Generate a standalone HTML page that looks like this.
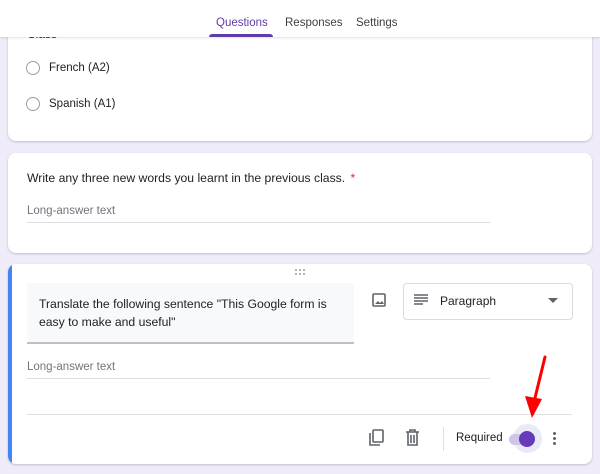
<html><head><style>
body{margin:0;width:600px;height:474px;background:#f0ebf8;font-family:"Liberation Sans",sans-serif;position:relative;overflow:hidden}
.a{position:absolute}
.card{position:absolute;left:8px;width:584px;background:#fff;border-radius:8px;box-shadow:0 1px 2px rgba(0,0,0,.2)}
.t{position:absolute;font-size:12px;color:#202124;white-space:nowrap}
.g{position:absolute;font-size:11.5px;color:#70757a;white-space:nowrap}
</style></head><body>
<div class="card" style="top:20px;height:121px"></div>
<div class="t" style="left:27px;top:27px;font-size:12px">Class</div>
<div class="a" style="left:0;top:0;width:600px;height:37px;background:#fff;box-shadow:0 1px 2px rgba(0,0,0,.12)"></div>
<div class="t" style="left:216px;top:17px;color:#5f3ca7;font-size:11.5px">Questions</div>
<div class="a" style="left:209px;top:34px;width:64px;height:3px;background:#5f3ca7;border-radius:3px 3px 0 0"></div>
<div class="t" style="left:285px;top:17px;color:#3c4043;font-size:11.5px">Responses</div>
<div class="t" style="left:356px;top:17px;color:#3c4043;font-size:11.5px">Settings</div>
<div class="a" style="left:26px;top:61px;width:12px;height:12px;border:1.5px solid #9aa0a6;border-radius:50%"></div>
<div class="t" style="left:49px;top:62px;font-size:11.5px">French (A2)</div>
<div class="a" style="left:26px;top:97px;width:12px;height:12px;border:1.5px solid #9aa0a6;border-radius:50%"></div>
<div class="t" style="left:49px;top:98px;font-size:11.5px">Spanish (A1)</div>

<div class="card" style="top:153px;height:100px"></div>
<div class="t" style="left:27px;top:171px;font-size:12.2px">Write any three new words you learnt in the previous class. <span style="color:#d93025;margin-left:2px">*</span></div>
<div class="g" style="left:27px;top:205px">Long-answer text</div>
<div class="a" style="left:27px;top:222px;width:463px;height:1px;background:#dadce0"></div>

<div class="card" style="top:264px;height:200px;overflow:hidden"><div class="a" style="left:0;top:0;width:4px;height:200px;background:#4285f4"></div></div>
<svg class="a" style="left:295px;top:269px" width="11" height="6"><g fill="#9aa0a6"><circle cx="1" cy="1" r="1"/><circle cx="5" cy="1" r="1"/><circle cx="9" cy="1" r="1"/><circle cx="1" cy="5" r="1"/><circle cx="5" cy="5" r="1"/><circle cx="9" cy="5" r="1"/></g></svg>
<div class="a" style="left:27px;top:283px;width:327px;height:59px;background:#f8f9fa;border-bottom:2px solid #bdc1c6"></div>
<div class="t" style="left:39px;top:295px;line-height:18px;font-size:12.2px">Translate the following sentence "This Google form is<br>easy to make and useful"</div>
<svg class="a" style="left:371px;top:292px" width="16" height="16" viewBox="0 0 16 16"><rect x="2" y="2" width="12" height="12" rx="1" fill="none" stroke="#5f6368" stroke-width="1.6"/><path d="M4 12l3-3 2 2 2-2 2 3z" fill="#5f6368"/></svg>
<div class="a" style="left:403px;top:283px;width:168px;height:35px;border:1px solid #dadce0;border-radius:4px"></div>
<svg class="a" style="left:414px;top:294px" width="14" height="12"><path d="M0 1h14M0 4h14M0 7h14M0 10h9" stroke="#5f6368" stroke-width="1.4"/></svg>
<div class="t" style="left:440px;top:294px;font-size:12px">Paragraph</div>
<svg class="a" style="left:548px;top:298px" width="10" height="5"><path d="M0 0h10L5 5z" fill="#5f6368"/></svg>
<div class="g" style="left:27px;top:361px">Long-answer text</div>
<div class="a" style="left:27px;top:378px;width:463px;height:1px;background:#dadce0"></div>
<div class="a" style="left:27px;top:414px;width:545px;height:1px;background:#e0e0e0"></div>
<svg class="a" style="left:368px;top:429px" width="16" height="18"><rect x="5" y="1" width="10" height="12" rx="1" fill="none" stroke="#5f6368" stroke-width="1.6"/><path d="M2 4v12h10" fill="none" stroke="#5f6368" stroke-width="1.6"/></svg>
<svg class="a" style="left:405px;top:429px" width="15" height="17"><path d="M1 3h13M5 3V1h5v2M3 3v13h9V3M6 6v8M9 6v8" fill="none" stroke="#5f6368" stroke-width="1.6"/></svg>
<div class="a" style="left:443px;top:427px;width:1px;height:24px;background:#e0e0e0"></div>
<div class="t" style="left:456px;top:432px;font-size:11.5px">Required</div>
<div class="a" style="left:513px;top:424px;width:29px;height:29px;border-radius:50%;background:#e8eaf6"></div>
<div class="a" style="left:509px;top:434px;width:25px;height:11px;border-radius:6px;background:#d1c4e9"></div>
<div class="a" style="left:519px;top:431px;width:16px;height:16px;border-radius:50%;background:#673ab7"></div>
<div class="a" style="left:553px;top:432px;width:3px;height:3px;border-radius:50%;background:#5f6368;box-shadow:0 5px 0 #5f6368,0 10px 0 #5f6368"></div>
<svg class="a" style="left:520px;top:352px" width="30" height="70"><path d="M25 5L14 50" stroke="#f00" stroke-width="3" stroke-linecap="round"/><path d="M5 44L12 66L22 47z" fill="#f00"/></svg>
</body></html>
